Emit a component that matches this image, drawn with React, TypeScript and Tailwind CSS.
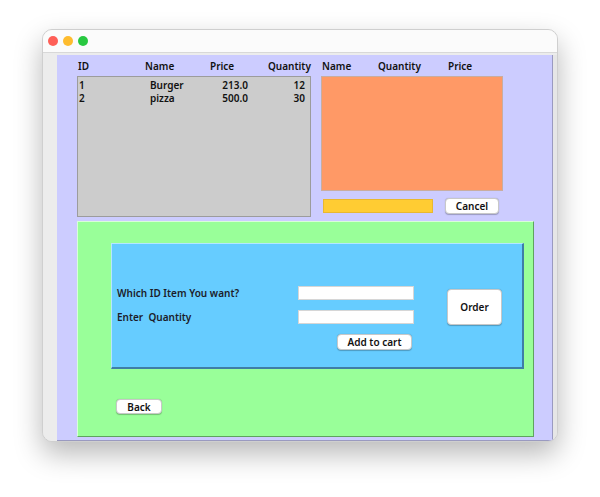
import React from 'react'

const font = "font-['Noto_Sans','DejaVu_Sans',sans-serif]"

const items = [
    { id: 1, name: 'Burger', price: '213.0', qty: 12 },
    { id: 2, name: 'pizza', price: '500.0', qty: 30 },
]

function SwingButton({ label, className }: { label: string; className: string }) {
    return (
        <button
            className={`flex items-center justify-center rounded-[4px] bg-white border border-[#c8c8c8] shadow-[0_0.5px_1px_rgba(0,0,0,0.25)] text-[10px] font-semibold text-[#111] leading-none ${className}`}
        >
            {label}
        </button>
    )
}

export default function App() {
    return (
        <div className={`w-[600px] h-[497px] bg-white pt-[29px] pl-[42px] ${font}`}>
            <div className="w-[516px] h-[413px] rounded-[10px] overflow-hidden bg-[#ececec] border border-[#cfcfcf] shadow-[0_12px_28px_rgba(0,0,0,0.28)] flex flex-col">
                {/* Title bar */}
                <div className="h-[23px] bg-[#fbfbfb] border-b border-[#d8d8d8] flex items-center gap-[5px] pl-[5px] shrink-0">
                    <span className="w-[10px] h-[10px] rounded-full bg-[#fe5f57]" />
                    <span className="w-[10px] h-[10px] rounded-full bg-[#febc2e]" />
                    <span className="w-[10px] h-[10px] rounded-full bg-[#28c840]" />
                </div>

                <div className="flex flex-1 pt-[2px]">
                    <div className="w-[14px] bg-[#ececec]" />

                    {/* Lavender content pane */}
                    <div className="w-[496px] bg-[#ccccff] border-r border-b border-[#9a9ac0] pl-[20px] pt-[4px] text-[#111]">
                        {/* Headers */}
                        <div className="flex h-[14px] items-center text-[10px] font-semibold">
                            <span className="w-[68px] pl-[1px]">ID</span>
                            <span className="w-[65px]">Name</span>
                            <span className="w-[58px]">Price</span>
                            <span className="w-[54px]">Quantity</span>
                            <span className="w-[56px]">Name</span>
                            <span className="w-[70px]">Quantity</span>
                            <span>Price</span>
                        </div>

                        <div className="flex mt-[3px]">
                            {/* Menu table */}
                            <div className="w-[234px] h-[141px] bg-[#cccccc] border border-[#9c9c9c] pt-[1px] text-[10px] font-semibold">
                                {items.map(it => (
                                    <div key={it.id} className="flex h-[13px] items-center leading-none">
                                        <span className="w-[72px] pl-[1px]">{it.id}</span>
                                        <span className="w-[50px]">{it.name}</span>
                                        <span className="w-[48px] text-right">{it.price}</span>
                                        <span className="w-[57px] text-right">{it.qty}</span>
                                    </div>
                                ))}
                            </div>

                            {/* Cart */}
                            <div className="ml-[10px] flex flex-col">
                                <div className="w-[182px] h-[115px] bg-[#ff9966] border border-[#c9ada0]" />
                                <div className="flex items-center mt-[7px]">
                                    <div className="ml-[2px] w-[110px] h-[14px] bg-[#ffcc33] border border-[#e8b830]" />
                                    <SwingButton label="Cancel" className="ml-[12px] w-[54px] h-[16px]" />
                                </div>
                            </div>
                        </div>

                        {/* Green panel */}
                        <div className="mt-[4px] w-[457px] h-[216px] bg-[#99ff99] border-t border-l border-[#d8ffd8] border-r border-b border-r-[#5fa35f] border-b-[#5fa35f] pt-[21px] pl-[33px]">
                            {/* Blue panel */}
                            <div className="w-[413px] h-[126px] bg-[#66ccff] border-t border-l border-[#b5e6ff] border-r-2 border-b-2 border-r-[#3f7ea6] border-b-[#3f7ea6] pl-[5px] flex text-[10px] font-semibold text-[#1c1c2a]">
                                <div className="pt-[42px]">
                                    <div className="flex items-center h-[14px]">
                                        <span className="w-[181px]">Which ID Item You want?</span>
                                        <div className="w-[116px] h-[14px] bg-white border border-[#d6d6d6]" />
                                    </div>
                                    <div className="flex items-center h-[14px] mt-[10px]">
                                        <span className="w-[181px]">Enter&nbsp; Quantity</span>
                                        <div className="w-[116px] h-[14px] bg-white border border-[#d6d6d6]" />
                                    </div>
                                    <SwingButton label="Add to cart" className="mt-[10px] ml-[220px] w-[75px] h-[16px]" />
                                </div>
                                <SwingButton label="Order" className="mt-[45px] ml-[33px] w-[55px] h-[36px]" />
                            </div>

                            <SwingButton label="Back" className="mt-[30px] ml-[5px] w-[46px] h-[15px]" />
                        </div>
                    </div>

                    <div className="flex-1 bg-[#e6e6e6]" />
                </div>
            </div>
        </div>
    )
}
